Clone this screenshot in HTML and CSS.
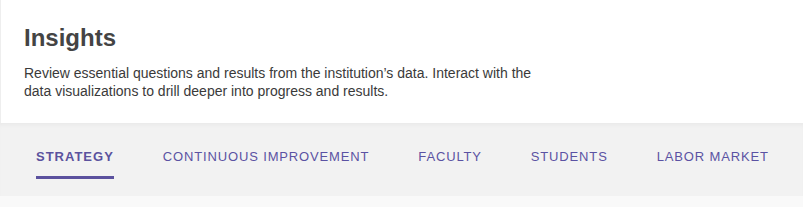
FILE: index.html
```html
<!DOCTYPE html>
<html lang="en">
<head>
  <meta charset="UTF-8" />
  <title>Insights</title>
  <link rel="stylesheet" href="styles.css">
</head>
<body>

  <!-- Page header -->
  <div class="page-header">
    <h1>Insights</h1>
    <p>Review essential questions and results from the institution’s data. Interact with the data visualizations to drill deeper into progress and results.</p>
  </div>

  <!-- Tabs -->
  <div class="tabs">
    <a class="tab active" href="#">Strategy</a>
    <a class="tab" href="#">Continuous Improvement</a>
    <a class="tab" href="#">Faculty</a>
    <a class="tab" href="#">Students</a>
    <a class="tab" href="#">Labor Market</a>
  </div>

  <div class="content"></div>

</body>
</html>
```

FILE: styles.css
```css
body {
  font-family: "Liberation Sans", Arial, sans-serif;
  margin: 0;
  background-color: #f9f9f9;
  color: #444;
}

.page-header {
  background-color: white;
  padding: 22px 23px 23px 23px;
  border-left: 1px solid #eee;
}

h1 {
  font-size: 24px;
  font-weight: bold;
  color: #444;
  margin: 0 0 10px 0;
  line-height: 32px;
}

.page-header p {
  font-size: 14px;
  line-height: 18px;
  color: #3a3a3a;
  margin: 0;
  max-width: 530px;
}

.tabs {
  display: flex;
  gap: 49px;
  padding: 0 36px;
  height: 73px;
  background-color: #f2f2f2;
  box-shadow: inset 0 4px 4px -2px rgba(0, 0, 0, 0.04);
}

.tab {
  display: flex;
  align-items: flex-end;
  flex-shrink: 0;
  white-space: nowrap;
  height: 56px;
  padding-bottom: 12px;
  box-sizing: border-box;
  font-size: 13px;
  line-height: 15px;
  letter-spacing: 0.85px;
  text-transform: uppercase;
  text-decoration: none;
  color: #5b52a3;
  border-bottom: 3px solid transparent;
}

.tab.active {
  font-weight: bold;
  letter-spacing: 1px;
  color: #5b529e;
  border-bottom-color: #5b519e;
}

.content {
  height: 40px;
}
```
